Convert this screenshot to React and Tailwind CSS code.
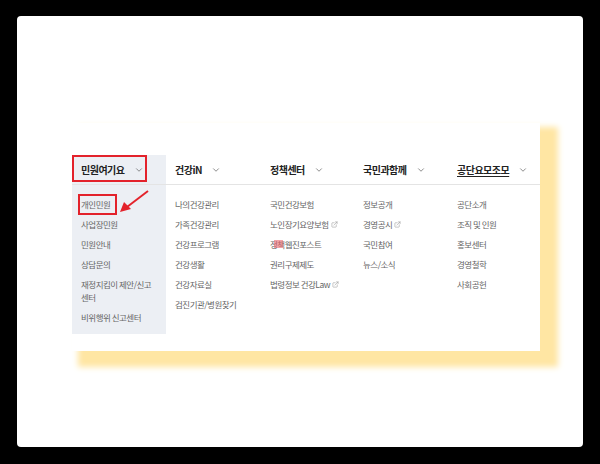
// App.jsx
// Menu capture: mega-dropdown of a site header, shown inside a framed screenshot.

import { ChevronDown, ExternalLink } from "lucide-react";

const font = { fontFamily: '"Noto Sans CJK KR", "Noto Sans", sans-serif' };

// ----------- MENU DATA -----------
const columns = [
  {
    title: "민원여기요",
    width: "w-[94px]",
    items: ["개인민원", "사업장민원", "민원안내", "상담문의", { label: "재정지킴이 제안/신고", second: "센터" }, "비위행위 신고센터"],
  },
  {
    title: "건강iN",
    width: "w-[95px]",
    items: ["나의건강관리", "가족건강관리", "건강프로그램", "건강생활", "건강자료실", "검진기관/병원찾기"],
  },
  {
    title: "정책센터",
    width: "w-[93px]",
    items: ["국민건강보험", { label: "노인장기요양보험", ext: true }, "정책웹진포스트", "권리구제제도", { label: "법령정보 건강Law", ext: true }],
  },
  {
    title: "국민과함께",
    width: "w-[94px]",
    items: ["정보공개", { label: "경영공시", ext: true }, "국민참여", "뉴스/소식"],
  },
  {
    title: "공단요모조모",
    width: "w-[92px]",
    underline: true,
    items: ["공단소개", "조직 및 인원", "홍보센터", "경영철학", "사회공헌"],
  },
];

function MenuItem({ item, index, col }) {
  const label = typeof item === "string" ? item : item.label;
  const ext = typeof item !== "string" && item.ext;
  const second = typeof item !== "string" && item.second;
  return (
    <li className="relative">
      <span className="inline-flex items-center gap-[2px]">
        {label}
        {ext && <ExternalLink size={7} strokeWidth={1.6} className="text-[#888]" />}
      </span>
      {second && <span className="block">{second}</span>}
      {/* red highlight box on the first item of the first column */}
      {col === 0 && index === 0 && (
        <span className="absolute left-[-3px] top-[-4px] h-[21px] w-[39px] border-2 border-[#e3222b]" />
      )}
      {/* little red square covering a letter */}
      {col === 2 && index === 2 && (
        <span className="absolute left-[4px] top-[2px] h-[8px] w-[9px] bg-[#e8646b]/60" />
      )}
    </li>
  );
}

export default function App() {
  return (
    <div className="min-h-screen bg-black px-[17px] pt-[16px] pb-[17px]" style={font}>
      <div className="h-[431px] rounded-[4px] bg-white pt-[107px] pl-[55px]">
        {/* MENU BOX with yellow glow */}
        <div className="relative h-[228px] w-[468px] bg-white pt-[32px] shadow-[12px_10px_6px_6px_#ffe6a3]">
          <div className="flex">
            {columns.map((col, ci) => (
              <div key={col.title} className={`${col.width} ${ci === 0 ? "bg-[#eceff4] pb-[10px]" : ""}`}>
                {/* header */}
                <div className="relative flex h-[30px] items-center gap-[9px] border-b border-[#e4e4e4] pl-[9px]">
                  <span
                    className={`text-[10px] font-bold tracking-[-0.5px] text-[#222] ${col.underline ? "underline underline-offset-2" : ""}`}
                  >
                    {col.title}
                  </span>
                  <ChevronDown size={10} strokeWidth={1.8} className="text-[#666]" />
                  {ci === 0 && (
                    <span className="absolute left-0 top-0 h-[27px] w-[75px] border-[2.5px] border-[#e3222b]" />
                  )}
                </div>
                {/* list */}
                <ul className="flex flex-col gap-[7px] pl-[9px] pr-[4px] pt-[13px] text-[8.5px] leading-[13px] tracking-[-0.5px] text-[#666]">
                  {col.items.map((item, i) => (
                    <MenuItem key={i} item={item} index={i} col={ci} />
                  ))}
                </ul>
              </div>
            ))}
          </div>

          {/* red arrow pointing at 개인민원 */}
          <svg className="absolute left-[46px] top-[66px]" width="32" height="26" viewBox="0 0 32 26">
            <line x1="30" y1="2" x2="9" y2="18" stroke="#e3222b" strokeWidth="2" />
            <polygon points="2,23 6,13 13,20" fill="#e3222b" />
          </svg>
        </div>
      </div>
    </div>
  );
}
